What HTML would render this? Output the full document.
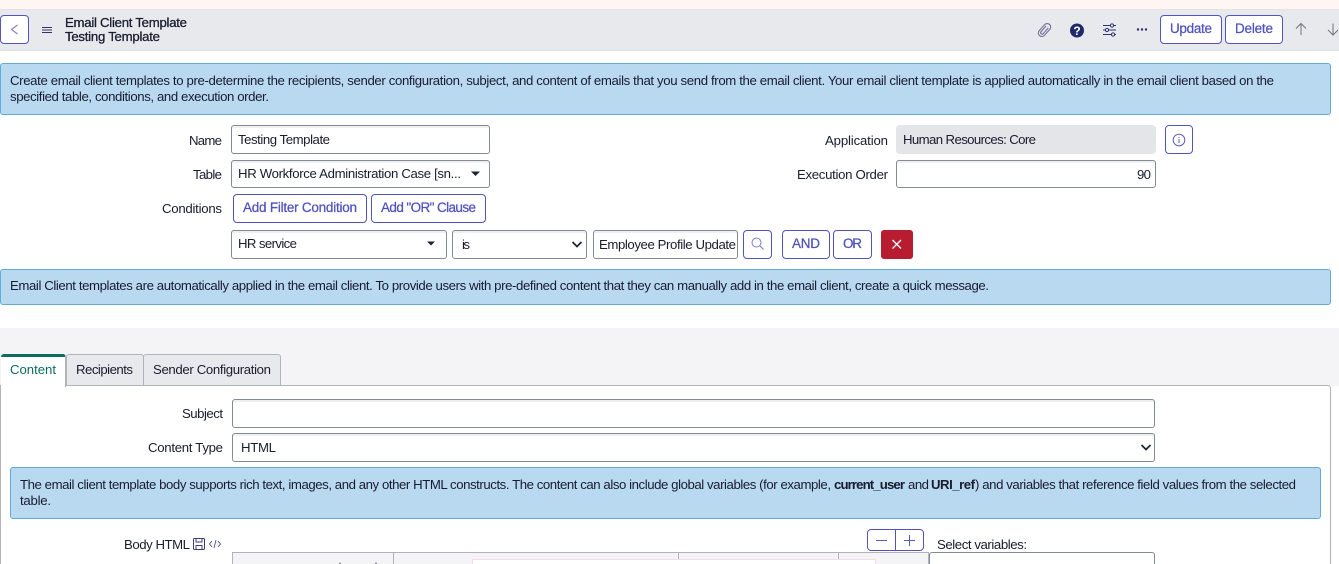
<!DOCTYPE html>
<html lang="en">
<head>
<meta charset="utf-8">
<title>Email Client Template</title>
<style>
html,body{margin:0;padding:0;background:#fff;}
#p{position:relative;width:1339px;height:564px;overflow:hidden;background:#fff;}
#p div{position:absolute;box-sizing:border-box;}
.i{background:#fff;border:1px solid #858995;border-radius:3px;box-shadow:inset 0 2px 0 #f0f0f2;}
.b{background:#fff;border:1.5px solid #5255bf;border-radius:4px;}
.info{background:#b9d9f1;border:1px solid #62a9dc;border-radius:3px;}
svg{position:absolute;left:0;top:0;}
text{font-family:"Liberation Sans",sans-serif;font-size:13.2px;fill:#181c2e;}
.v{fill:#4f52bd;font-size:13.5px;stroke:#4f52bd;stroke-width:.25px;}
.t{stroke:#181c2e;stroke-width:.3px;}
.bold{font-weight:bold;}
</style>
</head>
<body>
<div id="p">
  <div style="left:0;top:0;width:1339px;height:10px;background:#fff5f3;border-bottom:1px solid #e3e3e6;"></div>
  <div style="left:0;top:10px;width:1339px;height:41px;background:#e8e9ed;border-bottom:1px solid #e0e1e5;"></div>
  <div class="b" style="left:0;top:15px;width:29px;height:29px;"></div>
  <div class="b" style="left:1160px;top:15px;width:62px;height:29px;"></div>
  <div class="b" style="left:1225px;top:15px;width:58px;height:29px;"></div>

  <div class="info" style="left:0;top:63px;width:1331px;height:52px;"></div>

  <div class="i" style="left:231px;top:125px;width:259px;height:29px;"></div>
  <div class="i" style="left:231px;top:160px;width:259px;height:28px;"></div>
  <div class="b" style="left:233px;top:194px;width:134px;height:29px;"></div>
  <div class="b" style="left:371px;top:194px;width:115px;height:29px;"></div>
  <div class="i" style="left:231px;top:230px;width:216px;height:29px;"></div>
  <div class="i" style="left:452px;top:230px;width:135px;height:29px;"></div>
  <div class="i" style="left:593px;top:230px;width:145px;height:29px;"></div>
  <div class="b" style="left:743px;top:230px;width:29px;height:29px;"></div>
  <div class="b" style="left:782px;top:230px;width:48px;height:29px;"></div>
  <div class="b" style="left:833px;top:230px;width:39px;height:29px;"></div>
  <div style="left:881px;top:230px;width:32px;height:29px;background:#b81c31;border-radius:3px;"></div>

  <div style="left:896px;top:125px;width:260px;height:29px;background:#e4e5e9;border-radius:4px;"></div>
  <div class="b" style="left:1165px;top:125px;width:28px;height:29px;"></div>
  <div class="i" style="left:896px;top:160px;width:260px;height:28px;"></div>

  <div class="info" style="left:0;top:269px;width:1331px;height:36px;"></div>

  <div style="left:0;top:328px;width:1339px;height:58px;background:#f4f4f6;"></div>
  <div style="left:0;top:385px;width:1331px;height:179px;background:#fff;border:1px solid #b0b3bc;border-bottom:0;border-radius:0 3px 0 0;"></div>
  <div style="left:66px;top:354px;width:78px;height:32px;background:#e8e9ed;border:1px solid #b0b3bc;border-radius:3px 3px 0 0;"></div>
  <div style="left:143px;top:354px;width:138px;height:32px;background:#e8e9ed;border:1px solid #b0b3bc;border-radius:3px 3px 0 0;"></div>
  <div style="left:1px;top:354px;width:65px;height:33px;background:#fff;border-top:3px solid #0b6e5f;border-right:1px solid #b0b3bc;border-radius:3px 3px 0 0;"></div>

  <div class="i" style="left:232px;top:399px;width:923px;height:29px;"></div>
  <div class="i" style="left:232px;top:433px;width:923px;height:29px;"></div>
  <div class="info" style="left:10px;top:467px;width:1311px;height:52px;"></div>

  <div style="left:232px;top:552px;width:697px;height:20px;background:#f4f4f6;border:1px solid #b0b3bc;"></div>
  <div style="left:393px;top:552px;width:1px;height:12px;background:#b0b3bc;"></div>
  <div style="left:678px;top:552px;width:1px;height:12px;background:#b0b3bc;"></div>
  <div style="left:838px;top:552px;width:1px;height:12px;background:#b0b3bc;"></div>
  <div style="left:472px;top:559px;width:404px;height:10px;background:#fff;border:1px solid #f3dde2;"></div>
  <div class="i" style="left:929px;top:552px;width:226px;height:20px;box-shadow:none;"></div>
  <div class="b" style="left:867px;top:529px;width:57px;height:22px;"></div>
  <div style="left:895px;top:529px;width:1px;height:22px;background:#4f52bd;"></div>

  <svg width="1339" height="564" viewBox="0 0 1339 564" xmlns="http://www.w3.org/2000/svg">
    <!-- header text -->
    <text class="t" x="65" y="27" textLength="122">Email Client Template</text>
    <text class="t" x="65" y="41" textLength="95">Testing Template</text>
    <text class="v" x="1170" y="33" textLength="42">Update</text>
    <text class="v" x="1235" y="33" textLength="38">Delete</text>

    <!-- header icons -->
    <path d="M17.500 25l-6 4.500 6 4.500" fill="none" stroke="#7b7fd0" stroke-width="1.100"/>
    <path d="M42 27.500h10M42 30h10M42 32.500h10" stroke="#2e3270" stroke-width="1" fill="none"/>
    <g fill="none" stroke="#6d7196" stroke-width="1.100" transform="rotate(42 1044.500 30)">
      <rect x="1041" y="22.500" width="7" height="15" rx="3.500"/>
      <path d="M1043 26v7.500a1.500 1.500 0 0 0 3 0V26"/>
    </g>
    <circle cx="1077" cy="30.500" r="7" fill="#1f2a6b"/>
    <text x="1077" y="35" text-anchor="middle" style="font-size:12px;font-weight:bold;fill:#fff;">?</text>
    <g stroke="#2e3270" stroke-width="1" fill="none">
      <path d="M1103 25.500h13M1103 30h13M1103 34.500h13"/>
      <circle cx="1112" cy="25.500" r="1.600" fill="#e8e9ed"/>
      <circle cx="1107" cy="30" r="1.600" fill="#e8e9ed"/>
      <circle cx="1113" cy="34.500" r="1.600" fill="#e8e9ed"/>
    </g>
    <g fill="#2e3270"><circle cx="1138" cy="29.500" r="1.200"/><circle cx="1142" cy="29.500" r="1.200"/><circle cx="1146" cy="29.500" r="1.200"/></g>
    <path d="M1301 35V23.500M1296 28.500l5-5 5 5" fill="none" stroke="#6f7380" stroke-width="1"/>
    <path d="M1333 23.500V35M1328 30l5 5 5-5" fill="none" stroke="#6f7380" stroke-width="1"/>

    <!-- info 1 -->
    <text x="10" y="85" textLength="1264">Create email client templates to pre-determine the recipients, sender configuration, subject, and content of emails that you send from the email client. Your email client template is applied automatically in the email client based on the</text>
    <text x="10" y="101" textLength="259">specified table, conditions, and execution order.</text>

    <!-- form left -->
    <text x="189" y="145" textLength="33">Name</text>
    <text x="193" y="179" textLength="29">Table</text>
    <text x="162" y="213" textLength="60">Conditions</text>
    <text x="238" y="144" textLength="92">Testing Template</text>
    <text x="238" y="178" textLength="223">HR Workforce Administration Case [sn...</text>
    <path d="M471 171.500h9l-4.500 4.500z" fill="#1d2235"/>
    <text class="v" x="243" y="212" textLength="114">Add Filter Condition</text>
    <text class="v" x="381" y="212" textLength="95">Add "OR" Clause</text>
    <text x="238" y="248" textLength="59">HR service</text>
    <path d="M427 241.500h8l-4 4z" fill="#1d2235"/>
    <text x="462" y="249" textLength="8">is</text>
    <path d="M572.500 242l4.500 4.500 4.500-4.500" fill="none" stroke="#1d2235" stroke-width="1.700"/>
    <text x="599" y="249" textLength="137">Employee Profile Update</text>
    <circle cx="756.500" cy="242.500" r="4.500" fill="none" stroke="#7b7fd0" stroke-width="1"/>
    <path d="M760 246l3.500 3.500" stroke="#7b7fd0" stroke-width="1"/>
    <text class="v" x="792" y="248" textLength="28">AND</text>
    <text class="v" x="843" y="248" textLength="19">OR</text>
    <path d="M892.500 240l8.500 8.500M901 240l-8.500 8.500" stroke="#fff" stroke-width="1.300" fill="none"/>

    <!-- form right -->
    <text x="825" y="145" textLength="63">Application</text>
    <text x="797" y="179" textLength="91">Execution Order</text>
    <text x="903" y="144" textLength="133">Human Resources: Core</text>
    <text x="1137" y="179" textLength="14">90</text>
    <circle cx="1179" cy="140" r="5.800" fill="none" stroke="#5a5dc0" stroke-width="1"/>
    <path d="M1179 139v4M1179 137v1" stroke="#5a5dc0" stroke-width="1"/>

    <!-- info 2 -->
    <text x="10" y="290" textLength="979">Email Client templates are automatically applied in the email client. To provide users with pre-defined content that they can manually add in the email client, create a quick message.</text>

    <!-- tabs -->
    <text x="10" y="374" textLength="46" style="fill:#0b6e5f;">Content</text>
    <text x="76" y="374" textLength="57">Recipients</text>
    <text x="153" y="374" textLength="118">Sender Configuration</text>

    <!-- content -->
    <text x="182" y="418" textLength="41">Subject</text>
    <text x="148" y="452" textLength="75">Content Type</text>
    <text x="241" y="452" textLength="35">HTML</text>
    <path d="M1141.500 445l4.500 4.500 4.500-4.500" fill="none" stroke="#1d2235" stroke-width="1.700"/>
    <text x="20" y="489" textLength="811">The email client template body supports rich text, images, and any other HTML constructs. The content can also include global variables (for example,</text>
    <text class="bold" x="834" y="489" textLength="71">current_user</text>
    <text x="908" y="489" textLength="21">and</text>
    <text class="bold" x="931" y="489" textLength="44">URI_ref</text>
    <text x="975" y="489" textLength="321">) and variables that reference field values from the selected</text>
    <text x="20" y="505" textLength="31">table.</text>

    <text x="124" y="549" textLength="66">Body HTML</text>
    <g fill="none" stroke="#3a3f7a" stroke-width="1">
      <rect x="193.500" y="538.500" width="11" height="11" rx="1"/>
      <path d="M196 538.500v3.500h6v-3.500M196 549.500v-4h6v4"/>
    </g>
    <path d="M212 541l-2.500 3 2.500 3M218 541l2.500 3-2.500 3M216 540l-2 8" fill="none" stroke="#4a4f85" stroke-width=".9"/>
    <path d="M876 540.500h11M909.500 535v11M904 540.500h11" stroke="#5a5dc0" stroke-width="1" fill="none"/>
    <text x="937" y="549" textLength="90">Select variables:</text>
    <circle cx="340" cy="563.500" r="1" fill="#8a8e99"/>
    <circle cx="376" cy="563.500" r="1" fill="#8a8e99"/>
  </svg>
</div>
</body>
</html>
